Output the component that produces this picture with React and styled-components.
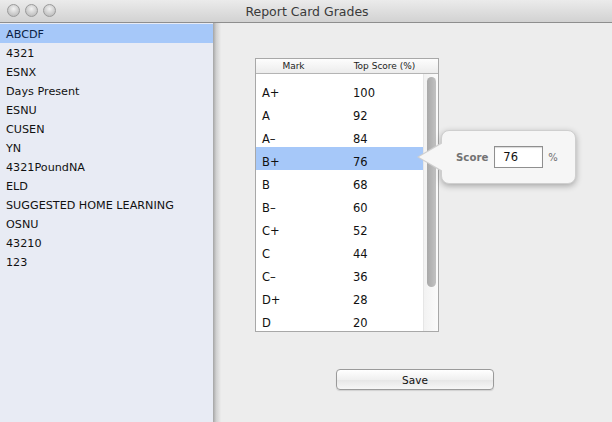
import React from 'react'
import styled, { createGlobalStyle } from 'styled-components'

const GlobalStyle = createGlobalStyle`
  html, body {
    margin: 0;
    padding: 0;
    width: 612px;
    height: 422px;
    overflow: hidden;
    font-family: "DejaVu Sans", "Liberation Sans", sans-serif;
  }
`;

const Window = styled.div`
  width: 612px;
  height: 422px;
  display: flex;
  flex-direction: column;
  background: #ededed;
`;

const TitleBar = styled.div`
  height: 22px;
  flex-shrink: 0;
  position: relative;
  display: flex;
  align-items: center;
  justify-content: center;
  background: linear-gradient(#ebebeb, #d2d2d2);
  border-bottom: 1px solid #8e8e8e;
`;

const Lights = styled.div`
  position: absolute;
  left: 7px;
  top: 4px;
  display: flex;
  gap: 5px;
`;

const Light = styled.span`
  width: 11px;
  height: 11px;
  border-radius: 50%;
  border: 1px solid #9a9a9a;
  background: radial-gradient(circle at 50% 35%, #f2f2f2, #c4c4c4 70%, #b0b0b0);
`;

const Title = styled.div`
  font-size: 12.5px;
  color: #3a3a3a;
  margin-left: 2px;
`;

const Body = styled.div`
  flex: 1;
  display: flex;
  min-height: 0;
`;

const Sidebar = styled.div`
  width: 213px;
  flex-shrink: 0;
  background: #e8ebf4;
  padding-top: 1px;
  display: flex;
  flex-direction: column;
`;

const SideRow = styled.div`
  height: 19px;
  flex-shrink: 0;
  box-sizing: border-box;
  display: flex;
  align-items: center;
  padding: 2px 0 0 6px;
  font-size: 11.2px;
  color: ${({ $selected }) => ($selected ? '#0c1f45' : '#111')};
  background: ${({ $selected }) => ($selected ? '#a6c8f9' : 'transparent')};
`;

const Divider = styled.div`
  width: 8px;
  flex-shrink: 0;
  background: linear-gradient(90deg, #a4a4a4, #d0d0d0 40%, #ececec);
`;

const Main = styled.div`
  flex: 1;
  position: relative;
  display: flex;
  flex-direction: column;
  padding: 35px 0 0 34px;
`;

const Table = styled.div`
  width: 182px;
  display: flex;
  flex-direction: column;
  border: 1px solid #a8a8a8;
  background: #fff;
`;

const Header = styled.div`
  height: 14px;
  display: grid;
  grid-template-columns: 75px 1fr;
  background: linear-gradient(#fdfdfd, #ececec);
  border-bottom: 1px solid #b4b4b4;
  font-size: 9px;
  color: #222;
`;

const HeadCell = styled.div`
  display: flex;
  align-items: center;
  justify-content: center;
`;

const Viewport = styled.div`
  display: flex;
  height: 257px;
`;

const Rows = styled.div`
  flex: 1;
  padding-top: 4px;
  display: flex;
  flex-direction: column;
`;

const Row = styled.div`
  height: 23px;
  flex-shrink: 0;
  display: grid;
  grid-template-columns: 91px 1fr;
  align-items: center;
  font-size: 11.5px;
  color: #111;
  padding-top: 6px;
  box-sizing: border-box;
  background: ${({ $selected }) => ($selected ? '#a6c8f9' : 'transparent')};
`;

const Cell = styled.div`
  padding-left: 6px;
`;

const Scroll = styled.div`
  width: 15px;
  flex-shrink: 0;
  border-left: 1px solid #e6e6e6;
  background: linear-gradient(90deg, #f2f2f2, #fbfbfb);
  padding: 3px 0 0 3px;
  box-sizing: border-box;
`;

const Thumb = styled.div`
  width: 9px;
  height: 210px;
  border-radius: 5px;
  background: linear-gradient(90deg, #a8a8a8, #c2c2c2);
`;

const Popover = styled.div`
  position: absolute;
  left: 220px;
  top: 107px;
  width: 135px;
  height: 54px;
  box-sizing: border-box;
  border-radius: 8px;
  background: #f6f6f6;
  border: 1px solid #cfcfcf;
  box-shadow: 0 2px 6px rgba(0, 0, 0, 0.3);
  display: flex;
  align-items: center;
  gap: 6px;
  padding-left: 14px;
  &::before {
    content: '';
    position: absolute;
    left: -25px;
    top: 11px;
    border-style: solid;
    border-width: 15px 25px 15px 0;
    border-color: transparent #cfcfcf transparent transparent;
  }
  &::after {
    content: '';
    position: absolute;
    left: -23px;
    top: 12px;
    border-style: solid;
    border-width: 14px 24px 14px 0;
    border-color: transparent #f6f6f6 transparent transparent;
  }
`;

const Label = styled.span`
  font-size: 10.2px;
  font-weight: bold;
  color: #727272;
`;

const Input = styled.div`
  width: 49px;
  height: 22px;
  box-sizing: border-box;
  border: 1px solid #8f8f8f;
  background: #fff;
  font-size: 11.5px;
  color: #111;
  display: flex;
  align-items: center;
  padding-left: 8px;
  box-shadow: inset 0 1px 1px rgba(0, 0, 0, 0.15);
`;

const Unit = styled.span`
  font-size: 10px;
  color: #6f6f6f;
  margin-left: -1px;
`;

const Footer = styled.div`
  display: flex;
  padding: 37px 0 0 81px;
`;

const Button = styled.div`
  width: 158px;
  height: 21px;
  box-sizing: border-box;
  border: 1px solid #9a9a9a;
  border-radius: 4px;
  background: linear-gradient(#ffffff, #f0f0f0 50%, #e6e6e6 51%, #f7f7f7);
  display: flex;
  align-items: center;
  justify-content: center;
  font-size: 10.5px;
  color: #111;
  box-shadow: 0 1px 1px rgba(0, 0, 0, 0.12);
`;

const lists = [
  'ABCDF', '4321', 'ESNX', 'Days Present', 'ESNU', 'CUSEN', 'YN',
  '4321PoundNA', 'ELD', 'SUGGESTED HOME LEARNING', 'OSNU', '43210', '123',
];

const grades = [
  ['A+', 100], ['A', 92], ['A\u2013', 84], ['B+', 76], ['B', 68], ['B\u2013', 60],
  ['C+', 52], ['C', 44], ['C\u2013', 36], ['D+', 28], ['D', 20],
];

export default function App() {
  return (
    <Window>
      <GlobalStyle />
      <TitleBar>
        <Lights>
          <Light />
          <Light />
          <Light />
        </Lights>
        <Title>Report Card Grades</Title>
      </TitleBar>
      <Body>
        <Sidebar>
          {lists.map((name, i) => (
            <SideRow key={name} $selected={i === 0}>{name}</SideRow>
          ))}
        </Sidebar>
        <Divider />
        <Main>
          <Table>
            <Header>
              <HeadCell>Mark</HeadCell>
              <HeadCell>Top Score (%)</HeadCell>
            </Header>
            <Viewport>
              <Rows>
                {grades.map(([mark, score]) => (
                  <Row key={mark} $selected={mark === 'B+'}>
                    <Cell>{mark}</Cell>
                    <Cell>{score}</Cell>
                  </Row>
                ))}
              </Rows>
              <Scroll>
                <Thumb />
              </Scroll>
            </Viewport>
          </Table>
          <Footer>
            <Button>Save</Button>
          </Footer>
          <Popover>
            <Label>Score</Label>
            <Input>76</Input>
            <Unit>%</Unit>
          </Popover>
        </Main>
      </Body>
    </Window>
  )
}
